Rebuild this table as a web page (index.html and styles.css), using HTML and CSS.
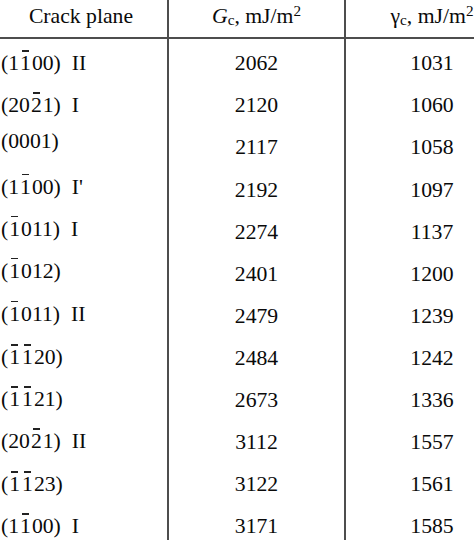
FILE: index.html
```html
<!DOCTYPE html>
<html>
<head>
<meta charset="utf-8">
<link rel="stylesheet" href="styles.css">
</head>
<body>
<table class="tbl">
  <thead>
    <tr>
      <th class="c1 h1">Crack plane</th>
      <th class="c2"><i>G</i><sub>c</sub>, mJ/m<sup>2</sup></th>
      <th class="c3">γ<sub>c</sub>, mJ/m<sup>2</sup></th>
    </tr>
  </thead>
  <tbody>
    <tr><td class="c1">(1<span class="ob">1</span>00)<span class="lbl">II</span></td><td class="c2">2062</td><td class="c3">1031</td></tr>
    <tr><td class="c1">(20<span class="ob">2</span>1)<span class="lbl">I</span></td><td class="c2">2120</td><td class="c3">1060</td></tr>
    <tr><td class="c1 up6">(0001)</td><td class="c2">2117</td><td class="c3">1058</td></tr>
    <tr><td class="c1 up3">(1<span class="ob">1</span>00)<span class="lbl">I'</span></td><td class="c2">2192</td><td class="c3">1097</td></tr>
    <tr><td class="c1 up3">(<span class="ob">1</span>011)<span class="lbl">I</span></td><td class="c2">2274</td><td class="c3">1137</td></tr>
    <tr><td class="c1 up3">(<span class="ob">1</span>012)</td><td class="c2">2401</td><td class="c3">1200</td></tr>
    <tr><td class="c1 up2">(<span class="ob">1</span>011)<span class="lbl">II</span></td><td class="c2">2479</td><td class="c3">1239</td></tr>
    <tr><td class="c1 up1">(<span class="ob">1</span><span class="ob">1</span>20)</td><td class="c2">2484</td><td class="c3">1242</td></tr>
    <tr><td class="c1 up1">(<span class="ob">1</span><span class="ob">1</span>21)</td><td class="c2">2673</td><td class="c3">1336</td></tr>
    <tr><td class="c1 up1">(20<span class="ob">2</span>1)<span class="lbl">II</span></td><td class="c2">3112</td><td class="c3">1557</td></tr>
    <tr><td class="c1">(<span class="ob">1</span><span class="ob">1</span>23)</td><td class="c2">3122</td><td class="c3">1561</td></tr>
    <tr><td class="c1">(1<span class="ob">1</span>00)<span class="lbl">I</span></td><td class="c2">3171</td><td class="c3">1585</td></tr>
  </tbody>
</table>
</body>
</html>
```
FILE: styles.css
```css
html, body {
  margin: 0;
  padding: 0;
  background: #ffffff;
  overflow: hidden;
}
body {
  width: 474px;
  height: 540px;
  font-family: "Liberation Serif", "Times New Roman", serif;
  font-size: 21.7px;
  color: #0a0a0a;
}
.tbl {
  border-collapse: separate;
  border-spacing: 0;
  table-layout: fixed;
  width: 518px;
}
.tbl th, .tbl td {
  box-sizing: border-box;
  padding: 0;
  vertical-align: top;
  white-space: nowrap;
  font-weight: normal;
}
.tbl th {
  line-height: 24px;
  padding-top: 4px;
  padding-bottom: 9px;
  border-bottom: 2px solid #4d4d4d;
  text-align: center;
}
.tbl td {
  line-height: 34.8px;
  padding-top: 7.3px;
}
.c1 {
  width: 169px;
  border-right: 2px solid #4d4d4d;
  text-align: left;
}
.tbl td.c1 {
  padding-left: 1px;
}
.tbl th.h1 {
  text-align: center;
  padding-right: 5px;
}
.c2 {
  width: 177px;
  border-right: 2px solid #4d4d4d;
  text-align: center;
}
.c3 {
  width: 172px;
  text-align: center;
}
.tbl td.up6 { padding-top: 1.3px; padding-bottom: 6px; }
.tbl td.up3 { padding-top: 4.3px; padding-bottom: 3px; }
.tbl td.up2 { padding-top: 5.3px; padding-bottom: 2px; }
.tbl td.up1 { padding-top: 6.3px; padding-bottom: 1px; }
sub, sup {
  font-size: 0.7em;
  line-height: 0;
}
sub {
  vertical-align: -2px;
}
sup {
  vertical-align: 7px;
}
.ob {
  position: relative;
  margin: 0 1px;
}
.ob::before {
  content: "";
  position: absolute;
  left: 2px;
  right: 2px;
  top: -1px;
  height: 1.6px;
  background: #222222;
}
.lbl {
  margin-left: 11px;
}
```
